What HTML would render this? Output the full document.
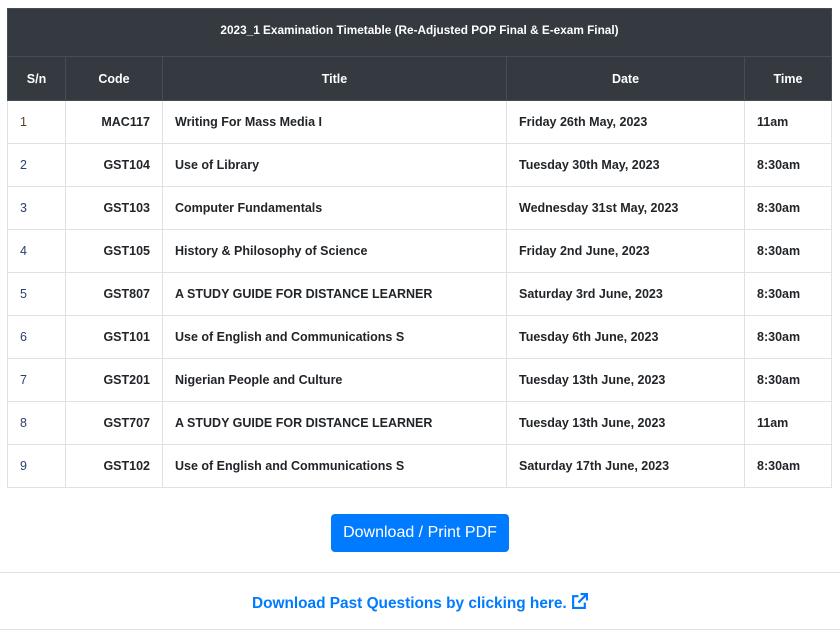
<!DOCTYPE html>
<html><head><meta charset="utf-8"><style>
*{box-sizing:border-box;margin:0;padding:0}
body{width:840px;height:634px;background:#fff;font-family:"Liberation Sans",sans-serif;position:relative;overflow:hidden;color:#212529}
table{position:absolute;left:7px;top:8px;width:825px;border-collapse:collapse;font-size:12.5px}
td,th{border:1px solid #dee2e6;padding:0 12px;height:43px}
th{background:#343a40;color:#fff;border-color:#454d55;font-weight:bold;text-align:center}
tr.h1 th{height:48px;font-size:11.8px;padding-bottom:6px}
tr.h2 th{height:44px}
td{font-weight:bold}
td.n{font-weight:normal;color:#2d3e6e;width:58px}
td.c{text-align:right;width:97px}
.btn{position:absolute;left:331px;top:514px;width:178px;height:38px;background:#007bff;color:#fff;border-radius:4px;font-size:16px;text-align:center;line-height:38px}
.hr{position:absolute;left:0;width:840px;height:1px;background:#dee2e6}
.lk{position:absolute;left:0;width:840px;top:593px;text-align:center;color:#007bff;font-weight:bold;font-size:15.4px}
</style></head><body>
<table>
<tr class="h1"><th colspan="5">2023_1 Examination Timetable (Re-Adjusted POP Final &amp; E-exam Final)</th></tr>
<tr class="h2"><th style="width:58px">S/n</th><th style="width:97px">Code</th><th style="width:344px">Title</th><th style="width:238px">Date</th><th>Time</th></tr>
<tr><td class="n" style="color:#5a4020">1</td><td class="c">MAC117</td><td>Writing For Mass Media I</td><td>Friday 26th May, 2023</td><td>11am</td></tr>
<tr><td class="n">2</td><td class="c">GST104</td><td>Use of Library</td><td>Tuesday 30th May, 2023</td><td>8:30am</td></tr>
<tr><td class="n">3</td><td class="c">GST103</td><td>Computer Fundamentals</td><td>Wednesday 31st May, 2023</td><td>8:30am</td></tr>
<tr><td class="n">4</td><td class="c">GST105</td><td>History &amp; Philosophy of Science</td><td>Friday 2nd June, 2023</td><td>8:30am</td></tr>
<tr><td class="n">5</td><td class="c">GST807</td><td>A STUDY GUIDE FOR DISTANCE LEARNER</td><td>Saturday 3rd June, 2023</td><td>8:30am</td></tr>
<tr><td class="n">6</td><td class="c">GST101</td><td>Use of English and Communications S</td><td>Tuesday 6th June, 2023</td><td>8:30am</td></tr>
<tr><td class="n">7</td><td class="c">GST201</td><td>Nigerian People and Culture</td><td>Tuesday 13th June, 2023</td><td>8:30am</td></tr>
<tr><td class="n">8</td><td class="c">GST707</td><td>A STUDY GUIDE FOR DISTANCE LEARNER</td><td>Tuesday 13th June, 2023</td><td>11am</td></tr>
<tr><td class="n">9</td><td class="c">GST102</td><td>Use of English and Communications S</td><td>Saturday 17th June, 2023</td><td>8:30am</td></tr>
</table>
<div class="btn">Download / Print PDF</div>
<div class="hr" style="top:572px"></div>
<div class="lk">Download Past Questions by clicking here. <svg width="17" height="17" viewBox="0 0 16 16" style="vertical-align:-2px"><path d="M7 3H2v11h11V9" fill="none" stroke="#007bff" stroke-width="2"/><path d="M9 1h6v6M15 1L7 9" fill="none" stroke="#007bff" stroke-width="2"/></svg></div>
<div class="hr" style="top:629px"></div>
</body></html>
